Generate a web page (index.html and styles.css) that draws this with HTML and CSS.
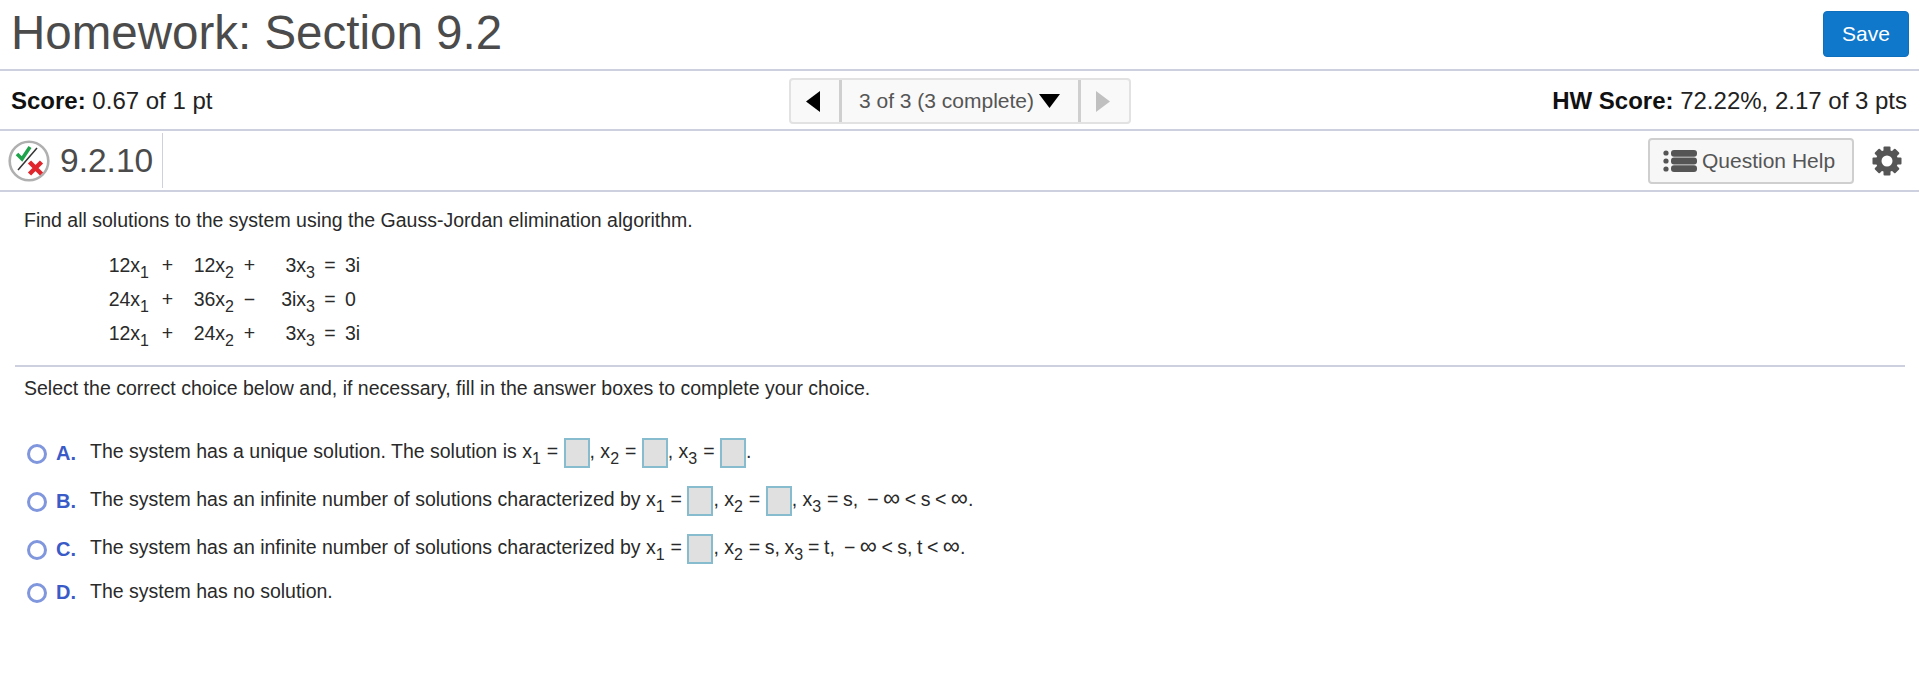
FILE: index.html
```html
<!DOCTYPE html>
<html lang="en">
<head>
<meta charset="utf-8">
<title>Homework: Section 9.2</title>
<link rel="stylesheet" href="styles.css">
</head>
<body>
<header class="title-bar">
  <h1 class="title">Homework: Section 9.2</h1>
  <button class="save">Save</button>
</header>
<section class="score-bar">
  <div class="score"><b>Score:</b> 0.67 of 1 pt</div>
  <div class="pager">
    <div class="pg pg-prev"><svg width="14" height="21" viewBox="0 0 14 21"><path d="M14 0V21L0 10.500Z" fill="#000"/></svg></div>
    <div class="pg pg-mid"><span>3 of 3 (3 complete)</span><svg width="21" height="14" viewBox="0 0 21 14"><path d="M0 0H21L10.500 14Z" fill="#000"/></svg></div>
    <div class="pg pg-next"><svg width="14" height="21" viewBox="0 0 14 21"><path d="M0 0V21L14 10.500Z" fill="#c0c0c0"/></svg></div>
  </div>
  <div class="hw"><b>HW Score:</b> 72.22%, 2.17 of 3 pts</div>
</section>
<section class="q-bar">
  <div class="q-id">
    <svg class="status" width="42" height="44" viewBox="0 0 42 44">
      <circle cx="21" cy="22" r="19.300" fill="#fff" stroke="#b0b0b0" stroke-width="2.600"/>
      <path d="M29 9L10 31" stroke="#333" stroke-width="1.500" fill="none"/>
      <path d="M9 15L14 20L22 8" stroke="#1ea34a" stroke-width="3.600" fill="none"/>
      <path d="M21.500 23L33.500 35M33.500 23L21.500 35" stroke="#e0262c" stroke-width="4.500" fill="none"/>
    </svg>
    <span class="q-num">9.2.10</span>
  </div>
  <div class="q-tools">
    <button class="help">
      <svg width="34" height="22" viewBox="0 0 34 22" fill="#555">
        <circle cx="3" cy="3" r="2.600"/><circle cx="3" cy="11" r="2.600"/><circle cx="3" cy="19" r="2.600"/>
        <rect x="8" y="0" width="26" height="6.800" rx="3"/><rect x="8" y="7.600" width="26" height="6.800" rx="3"/><rect x="8" y="15.200" width="26" height="6.800" rx="3"/>
      </svg>
      <span>Question Help</span>
    </button>
    <svg class="gear" width="30" height="30" viewBox="-15 -15 30 30">
      <g fill="#555">
        <circle r="11"/>
        <rect x="-3.500" y="-14.500" width="7" height="29" rx="1"/>
        <rect x="-3.500" y="-14.500" width="7" height="29" rx="1" transform="rotate(45)"/>
        <rect x="-3.500" y="-14.500" width="7" height="29" rx="1" transform="rotate(90)"/>
        <rect x="-3.500" y="-14.500" width="7" height="29" rx="1" transform="rotate(135)"/>
      </g>
      <circle r="5.500" fill="#fff"/>
    </svg>
  </div>
</section>
<main class="content">
  <p class="prompt">Find all solutions to the system using the Gauss-Jordan elimination algorithm.</p>
  <div class="system">
    <span class="t">12x<sub>1</sub></span><span class="o">+</span><span class="t">12x<sub>2</sub></span><span class="o">+</span><span class="t">3x<sub>3</sub></span><span class="o">=</span><span class="r">3i</span>
    <span class="t">24x<sub>1</sub></span><span class="o">+</span><span class="t">36x<sub>2</sub></span><span class="o">&minus;</span><span class="t">3ix<sub>3</sub></span><span class="o">=</span><span class="r">0</span>
    <span class="t">12x<sub>1</sub></span><span class="o">+</span><span class="t">24x<sub>2</sub></span><span class="o">+</span><span class="t">3x<sub>3</sub></span><span class="o">=</span><span class="r">3i</span>
  </div>
  <hr class="rule">
  <p class="prompt select">Select the correct choice below and, if necessary, fill in the answer boxes to complete your choice.</p>
  <ul class="choices">
    <li class="choice"><i class="radio"></i><b class="letter">A.</b><span class="text">The system has a unique solution. The solution is x<sub>1</sub> = <i class="box"></i>, x<sub>2</sub> = <i class="box"></i>, x<sub>3</sub> = <i class="box"></i>.</span></li>
    <li class="choice"><i class="radio"></i><b class="letter">B.</b><span class="text">The system has an infinite number of solutions characterized by x<sub>1</sub> = <i class="box"></i>, x<sub>2</sub> = <i class="box"></i>, x<sub>3</sub> <span class="tail">= s,&nbsp; &minus; <span class="inf">&infin;</span> &lt; s &lt; <span class="inf">&infin;</span>.</span></span></li>
    <li class="choice"><i class="radio"></i><b class="letter">C.</b><span class="text">The system has an infinite number of solutions characterized by x<sub>1</sub> = <i class="box"></i>, x<sub>2</sub> <span class="tail">= s, x<sub>3</sub> = t,&nbsp; &minus; <span class="inf">&infin;</span> &lt; s, t &lt; <span class="inf">&infin;</span>.</span></span></li>
    <li class="choice short"><i class="radio"></i><b class="letter">D.</b><span class="text">The system has no solution.</span></li>
  </ul>
</main>
</body>
</html>
```
FILE: styles.css
```css
* { box-sizing: border-box; }
html, body { margin: 0; padding: 0; background: #fff; }
body { font-family: "Liberation Sans", Arial, sans-serif; color: #222; height: 683px; overflow: hidden; }

.title-bar { height: 71px; display: flex; align-items: flex-start; justify-content: space-between; padding: 11px 10px 0 11px; border-bottom: 2px solid #cdd0de; }
.title { margin: 0; font-size: 47.500px; font-weight: 400; line-height: 44px; color: #4b4b4b; }
.save { width: 86px; height: 46px; background: #0f78cb; border: 1px solid #0e6fbd; border-radius: 4px; color: #fff; font: 21px "Liberation Sans", Arial, sans-serif; padding: 0; }

.score-bar { height: 60px; display: grid; grid-template-columns: 1fr auto 1fr; align-items: center; padding: 2px 12px 0; border-bottom: 2px solid #cdd0de; font-size: 24px; color: #222; }
.score-bar b { color: #111; }
.score { margin-left: -1px; }
.hw { text-align: right; }

.pager { display: flex; width: 342px; height: 46px; border: 2px solid #e2e2e2; border-radius: 4px; background: #f9f9f9; color: #555; font-size: 21px; }
.pg { display: flex; align-items: center; justify-content: center; gap: 5px; }
.pg-prev { width: 51px; border-right: 3px solid #cfcfcf; padding-right: 4px; }
.pg-mid { width: 239px; border-right: 3px solid #cfcfcf; }
.pg-next { flex: 1; padding-right: 4px; }

.q-bar { height: 61px; display: flex; justify-content: space-between; align-items: stretch; border-bottom: 2px solid #cdd0de; }
.q-id { display: flex; align-items: center; gap: 10px; width: 163px; padding: 0 0 0 8px; margin-top: 2px; margin-bottom: 2px; border-right: 1px solid #cdd0de; }
.q-num { font-size: 33.500px; color: #4b4b4b; }
.q-tools { display: flex; align-items: center; gap: 18px; padding-right: 17px; }
.help { display: flex; align-items: center; gap: 5px; width: 206px; height: 46px; padding: 0 0 0 13px; background: #f7f7f7; border: 2px solid #cfcfcf; border-radius: 4px; color: #555; font: 21px "Liberation Sans", Arial, sans-serif; }
.gear { display: block; }

.content { padding: 0 14px 0 15px; font-size: 19.500px; }
.prompt { margin: 0 0 0 9px; line-height: 22px; color: #2a2a2a; }
.content > .prompt:first-child { padding-top: 17px; box-sizing: content-box; }
.system { margin: 17px 0 0 79px; display: grid; grid-template-columns: 55px 37px 48px 31px 50px 30px auto; grid-auto-rows: 34px; align-items: center; justify-content: start; color: #2a2a2a; width: max-content; }
.system .t { text-align: right; }
.system .o { text-align: center; }
sub { font-size: 16px; line-height: 0; vertical-align: -6px; }
.rule { margin: 15px 0 0; border: 0; height: 2px; background: #cdd0de; }
.select { margin-top: 10px; }
.choices { list-style: none; margin: 29px 0 0 12px; padding: 0; }
.choice { display: flex; align-items: center; height: 48px; color: #2a2a2a; }
.choice.short { height: 38px; }
.radio { width: 20px; height: 20px; margin-top: 4px; border: 3px solid #8096dd; border-radius: 50%; background: #fff; flex: none; }
.letter { width: 34px; margin-left: 9px; margin-top: 3px; color: #3a5bc7; font-size: 20px; font-style: normal; flex: none; }
.text { line-height: 30px; }
.text sub { margin-right: 0.500px; }
.box { display: inline-block; width: 26px; height: 30px; vertical-align: middle; border: 2px solid #86bccd; background: #e0e0e0; }
.inf { font-size: 24px; line-height: 0; }
.tail { word-spacing: -0.900px; }
```
